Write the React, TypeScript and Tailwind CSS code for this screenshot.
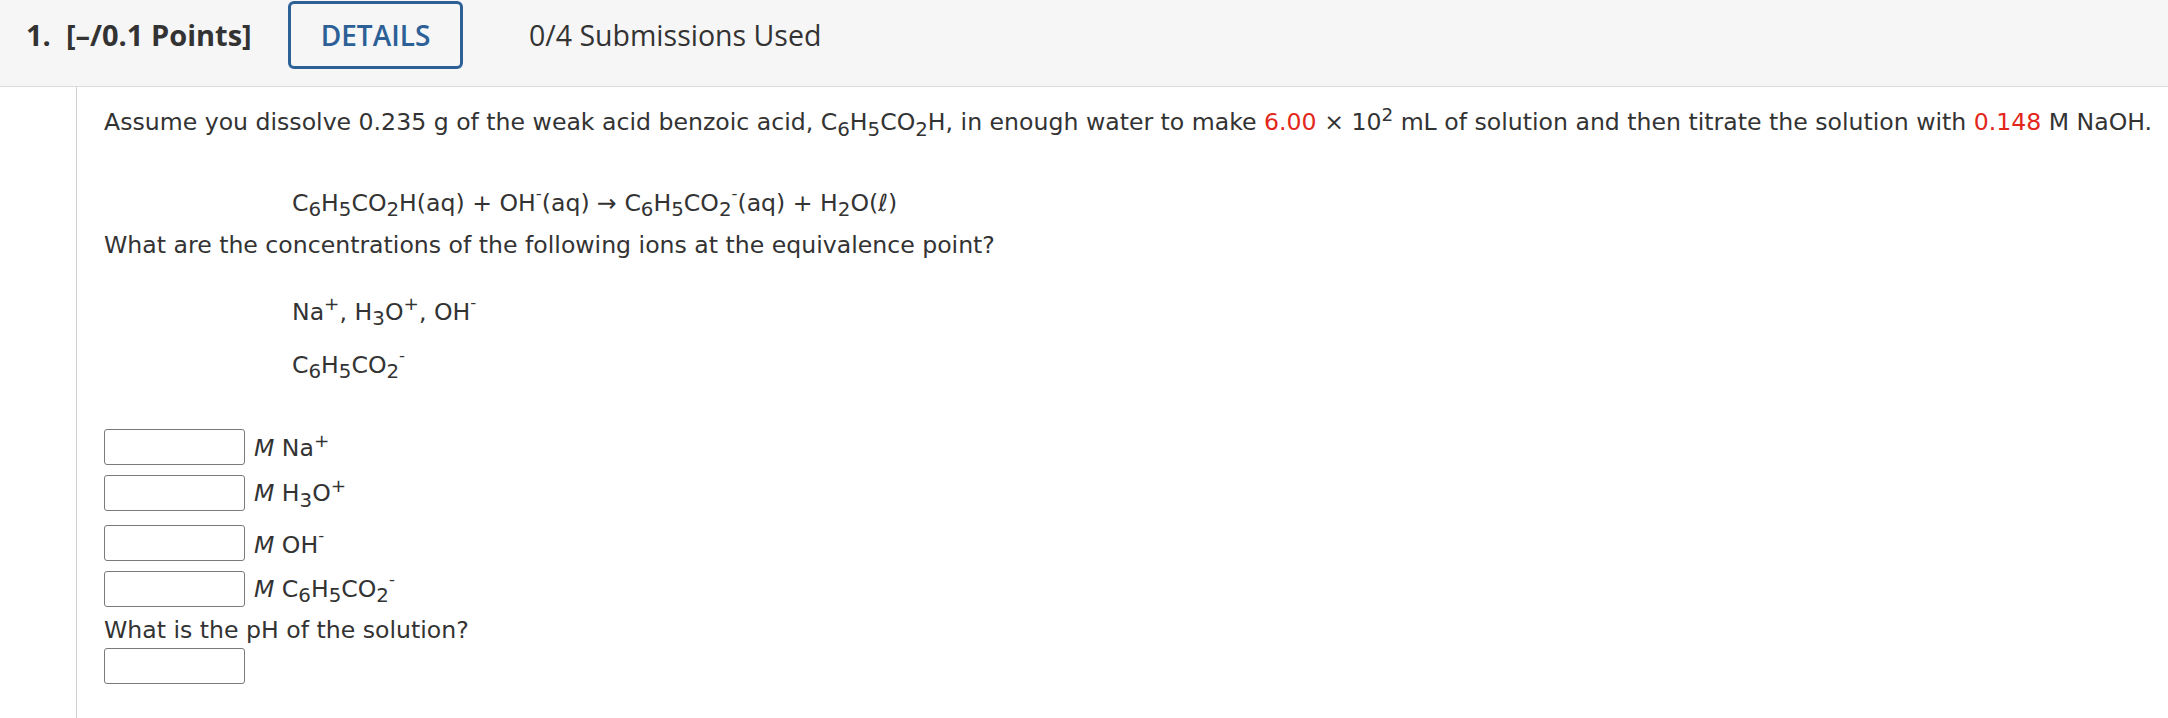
import React from "react";

function Sub({ children }: { children: React.ReactNode }) {
  return <span className="text-[0.84em] leading-none align-[-0.28em]">{children}</span>;
}

function Sup({ children }: { children: React.ReactNode }) {
  return <span className="text-[0.78em] leading-none align-[0.5em]">{children}</span>;
}

function Minus() {
  return <span className="text-[0.7em] leading-none align-[0.7em]">-</span>;
}

function Benzoate() {
  return (
    <>
      C<Sub>6</Sub>H<Sub>5</Sub>CO<Sub>2</Sub>
    </>
  );
}

function AnswerBox() {
  return <div className="w-[141px] h-[36px] border border-[#7a7a7a] rounded-[3px] bg-white shrink-0" />;
}

function AnswerRow({ label, className }: { label: React.ReactNode; className?: string }) {
  return (
    <div className={"flex items-center gap-[9px] h-[36px] " + (className ?? "")}>
      <AnswerBox />
      <span className="leading-[28px]">
        <i>M</i> {label}
      </span>
    </div>
  );
}

export default function App() {
  return (
    <div className="w-[2168px] h-[718px] bg-white overflow-hidden text-[#333333]">
      {/* question header */}
      <div className="h-[87px] bg-[#f6f6f6] border-b border-[#dcdcdc] pl-[26px] pt-[1px] font-['Open_Sans',sans-serif]">
        <div className="flex items-center h-[68px]">
          <span className="w-[225px] text-[29px] font-bold whitespace-nowrap">1.&nbsp; [–/0.1 Points]</span>
          <div className="ml-[37px] w-[175px] h-[68px] border-[3px] border-[#2c6096] rounded-[6px] flex items-center justify-center">
            <span className="text-[28px] font-semibold text-[#2c6096]">DETAILS</span>
          </div>
          <span className="ml-[66px] text-[28.5px] text-[#333333]">0/4 Submissions Used</span>
        </div>
      </div>

      {/* question body */}
      <div className="ml-[76px] border-l border-[#d0d0d0] h-[631px] pl-[27px] pt-[19px] font-['DejaVu_Sans',Verdana,sans-serif] text-[23.6px] leading-[32px]">
        <p className="whitespace-nowrap">
          Assume you dissolve 0.235 g of the weak acid benzoic acid, <Benzoate />H, in enough water to make{" "}
          <span className="text-[#e3261b]">6.00</span> × 10<Sup>2</Sup> mL of solution and then titrate the solution with{" "}
          <span className="text-[#e3261b]">0.148</span> M NaOH.
        </p>

        <p className="mt-[46px] ml-[188px]">
          <Benzoate />H(aq) + OH<Minus />(aq) → <Benzoate />
          <Minus />(aq) + H<Sub>2</Sub>O(ℓ)
        </p>

        <p className="mt-[9px]">What are the concentrations of the following ions at the equivalence point?</p>

        <p className="mt-[34px] ml-[188px]">
          Na<Sup>+</Sup>, H<Sub>3</Sub>O<Sup>+</Sup>, OH<Minus />
        </p>
        <p className="mt-[20px] ml-[188px]">
          <Benzoate />
          <Minus />
        </p>

        <div className="mt-[47px] flex flex-col">
          <AnswerRow label={<>Na<Sup>+</Sup></>} />
          <AnswerRow className="mt-[10px]" label={<>H<Sub>3</Sub>O<Sup>+</Sup></>} />
          <AnswerRow className="mt-[14px]" label={<>OH<Minus /></>} />
          <AnswerRow className="mt-[10px]" label={<><Benzoate /><Minus /></>} />
        </div>

        <p className="mt-[7px]">What is the pH of the solution?</p>
        <div className="mt-[2px]">
          <AnswerBox />
        </div>
      </div>
    </div>
  );
}
